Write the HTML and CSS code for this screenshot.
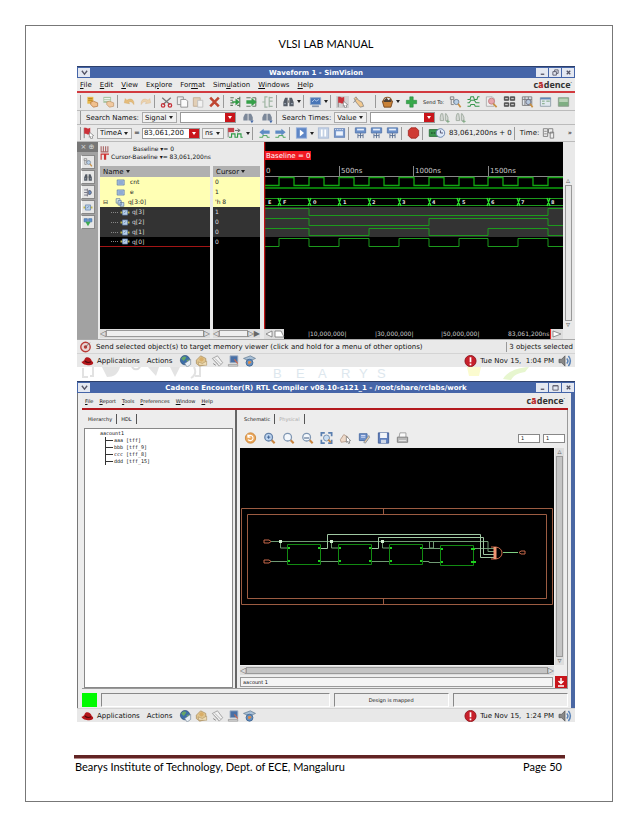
FILE: index.html
```html
<!DOCTYPE html>
<html lang="en">
<head>
    <meta charset="UTF-8">
    <meta name="viewport" content="width=device-width, initial-scale=1.0">
    <title>VLSI LAB MANUAL</title>
    <link rel="stylesheet" href="styles.css">
</head>
<body>

<!-- shared icons -->
<svg class="sprite" aria-hidden="true">
    <symbol id="i-note" viewBox="0 0 14 14"><path d="M1 1h7v8H1z" fill="#e8b84a"/><path d="M2 3h5M2 5h5" stroke="#b07c1e"/><path d="M5 7l3-1 5 2v4l-5 1-3-3z" fill="#f0c08e" stroke="#b0713c" stroke-width=".8"/></symbol>
    <symbol id="i-note2" viewBox="0 0 14 14"><path d="M1 1h9v7H1z" fill="#a9c5a4"/><path d="M2 3h7M2 5h7" stroke="#fff"/><path d="M5 7l3-1 5 2v4l-5 1-3-3z" fill="#f0c9a0" stroke="#c09468" stroke-width=".8"/></symbol>
    <symbol id="i-undo" viewBox="0 0 14 14"><path d="M1 8l1-5 2 2c4-3 9-1 8 5-1-3-4-4-6-3l1 2z" fill="#e5bd7c" stroke="#cfa35c" stroke-width=".5"/></symbol>
    <symbol id="i-redo" viewBox="0 0 14 14"><path d="M13 8l-1-5-2 2c-4-3-9-1-8 5 1-3 4-4 6-3L7 9z" fill="#ecd3ae" stroke="#d8b98d" stroke-width=".5"/></symbol>
    <symbol id="i-cut" viewBox="0 0 14 14"><path d="M2 2l9 8M12 2L3 10" stroke="#777" stroke-width="1.5"/><circle cx="3" cy="11" r="2" fill="none" stroke="#c8323a" stroke-width="1.5"/><circle cx="11" cy="11" r="2" fill="none" stroke="#c8323a" stroke-width="1.5"/></symbol>
    <symbol id="i-copy" viewBox="0 0 14 14"><path d="M1 1h7v9H1z" fill="#eee" stroke="#888"/><path d="M5 4h6l2 2v7H5z" fill="#fafafa" stroke="#888"/></symbol>
    <symbol id="i-paste" viewBox="0 0 14 14"><path d="M1 2h8v10H1z" fill="#e2cfb6" stroke="#c0ab90"/><path d="M6 5h6v8H6z" fill="#f2f2f2" stroke="#bbb"/></symbol>
    <symbol id="i-del" viewBox="0 0 14 14"><path d="M2 2l10 10M12 2L2 12" stroke="#bf4632" stroke-width="3"/></symbol>
    <symbol id="i-expand" viewBox="0 0 14 14"><path d="M1 2h4M1 5h3M1 8h4M1 11h3M12 1v12M9 3h3M9 11h3" stroke="#5e755e" stroke-width="1.3"/><path d="M3 6h4V3l5 4-5 4V8H3z" fill="#2f9b43"/></symbol>
    <symbol id="i-collapse" viewBox="0 0 14 14"><path d="M1 2h5M1 12h5M12 2v10M8 2h4M8 12h4" stroke="#667a66" stroke-width="1.3"/><path d="M1 5h6V2l6 5-6 5V9H1z" fill="#35a048"/></symbol>
    <symbol id="i-tree" viewBox="0 0 14 14"><path d="M7 1H4v12h3M4 7H1M9 1v12M9 2h4M9 6h4M9 12h4" fill="none" stroke="#9fb5a3" stroke-width="1.4"/></symbol>
    <symbol id="i-binoc" viewBox="0 0 14 14"><path d="M3 2h3v10H1V7zM11 2H8v10h5V7z" fill="#555c66"/><path d="M6 5h2v3H6z" fill="#888"/><path d="M2 9h2M10 9h2" stroke="#b7c4d5"/></symbol>
    <symbol id="i-find" viewBox="0 0 14 14"><path d="M3 2h3v8H1V6zM10 2H7v8h5V6z" fill="#7c8899"/><path d="M9 10h4l-2 3z" fill="#4469a8"/></symbol>
    <symbol id="i-findoff" viewBox="0 0 14 14"><path d="M3 2h2l1 8H2V6zM9 2H8v8h3V6z" fill="#d5d8d5" stroke="#9da99d"/><path d="M9 11h4M11 9v4" stroke="#7aa67e"/></symbol>
    <symbol id="i-screen" viewBox="0 0 14 14"><path d="M1 2h12v8H1z" fill="#4876b8" stroke="#8ea6c8"/><path d="M3 12h8" stroke="#8895aa" stroke-width="2"/><path d="M3 7l3-3 2 2 3-2" stroke="#bed2f0" fill="none"/></symbol>
    <symbol id="i-flag" viewBox="0 0 14 14"><path d="M2 1v12" stroke="#777"/><path d="M2 1c3-1 4 2 7 0v7c-3 2-4-1-7 0z" fill="#cc3038"/><path d="M8 6l5 4-2 1 1 2-2 1-1-3-1 1z" fill="#fff" stroke="#666" stroke-width=".7"/></symbol>
    <symbol id="i-hand" viewBox="0 0 14 14"><path d="M2 3l2-2 3 4 4 2 2 5-4 1-5-6z" fill="#f2c98f" stroke="#777" stroke-width=".8"/><path d="M1 8l4-5" stroke="#888"/></symbol>
    <symbol id="i-basket" viewBox="0 0 14 14"><path d="M2 6c1-6 9-6 10 0" fill="none" stroke="#8b5a2b" stroke-width="1.3"/><path d="M1 6h12l-2 7H3z" fill="#c98238" stroke="#70431c"/><path d="M3 5l3-3 2 3 3-2v4H3z" fill="#4b4036"/></symbol>
    <symbol id="i-plus" viewBox="0 0 14 14"><path d="M5 1h4v4h4v4H9v4H5V9H1V5h4z" fill="#37aa4b" stroke="#238036" stroke-width=".6"/></symbol>
    <symbol id="i-treemag" viewBox="0 0 14 14"><path d="M1 1h4v3H1zM5 5h4v3H5zM2 4v6h3" fill="none" stroke="#777"/><circle cx="8" cy="7" r="3" fill="#b8cfe6" stroke="#6c7f93"/><path d="M10 9l3 4" stroke="#c99043" stroke-width="2"/></symbol>
    <symbol id="i-waves" viewBox="0 0 14 14"><path d="M0 4h3l1-3h3l1 3h3l1-3h2M0 8h2l2-3h4l2 3h4M0 12h3l1-2h4l1 2h5" fill="none" stroke="#37964d" stroke-width="1.2"/></symbol>
    <symbol id="i-docmag" viewBox="0 0 14 14"><path d="M1 1h7l2 2v9H1z" fill="#eee" stroke="#aaa"/><circle cx="7" cy="6" r="3.5" fill="#e7a6ac" stroke="#c07a80"/><path d="M9 9l4 4" stroke="#c99043" stroke-width="2"/></symbol>
    <symbol id="i-blocks" viewBox="0 0 14 14"><path d="M1 1h5v4H1zM8 1h5v4H8zM1 8h5v4H1zM8 8h5v4H8z" fill="#666" stroke="#444"/><path d="M2 3h3M9 3h3M2 10h3M9 10h3" stroke="#ddd"/></symbol>
    <symbol id="i-gridmag" viewBox="0 0 14 14"><path d="M1 1h11v10H1zM4 1v10M8 1v10M1 4h11" fill="#dfe5ec" stroke="#777"/><circle cx="8" cy="7" r="3" fill="#b6c8dd" stroke="#667"/><path d="M10 9l3 4" stroke="#c99043" stroke-width="2"/></symbol>
    <symbol id="i-panel" viewBox="0 0 14 14"><path d="M1 2h12v10H1z" fill="#dfe8ee" stroke="#8b9aa6"/><path d="M1 3h12" stroke="#5f87b8" stroke-width="2"/><path d="M3 6h3M3 9h3M8 6h4" stroke="#6b9a6c"/></symbol>
    <symbol id="i-green" viewBox="0 0 14 14"><path d="M1 2h12v10H1z" fill="#7fae83" stroke="#8b9a8c"/><path d="M2 3h10v4H2z" fill="#b8d2b7"/></symbol>
    <symbol id="i-gate" viewBox="0 0 14 14"><path d="M1 3h5M1 7h5M1 11h5M6 1v12" stroke="#667" stroke-width="1.3"/><path d="M8 4h2c3 0 3 6 0 6H8z" fill="#6f94c8" stroke="#445"/></symbol>
    <symbol id="i-groups" viewBox="0 0 14 14"><path d="M1 1h5v5H1zM8 1h5v5H8z" fill="#5f92cf" stroke="#3f6aa0"/><path d="M3 6l4 7 4-7z" fill="#3faa52"/></symbol>
    <symbol id="i-jump" viewBox="0 0 20 14"><path d="M2 1v11" stroke="#777"/><path d="M2 1h7v5H2z" fill="#c3414a"/><path d="M3 12h3V8h4v4h3V8h4v4h2" fill="none" stroke="#2e9a45" stroke-width="1.3"/><path d="M10 4h5M13 2l3 2-3 2" stroke="#555" fill="none"/></symbol>
    <symbol id="i-left" viewBox="0 0 14 14"><path d="M1 6l5-4v2h7v4H6v2z" fill="#5e8bc4"/><path d="M1 12h4v-2h5v2h3" fill="none" stroke="#3c9d4c"/></symbol>
    <symbol id="i-right" viewBox="0 0 14 14"><path d="M13 6L8 2v2H1v4h7v2z" fill="#5e8bc4"/><path d="M1 12h4v-2h5v2h3" fill="none" stroke="#3c9d4c"/></symbol>
    <symbol id="i-play" viewBox="0 0 14 14"><rect x="1" y="1" width="12" height="12" fill="#5e86c6" stroke="#93aedb"/><path d="M5 3l5 4-5 4z" fill="#fff"/></symbol>
    <symbol id="i-pause" viewBox="0 0 14 14"><rect x="1" y="1" width="12" height="12" fill="#c4d2e6" stroke="#a9bad4"/><path d="M5 3v8M9 3v8" stroke="#fff" stroke-width="2"/></symbol>
    <symbol id="i-film" viewBox="0 0 14 14"><rect x="1" y="2" width="12" height="10" fill="#7899cd" stroke="#6683b4"/><path d="M3 5h8v5H3z" fill="#edf3fc"/><path d="M2 3h10" stroke="#fff" stroke-dasharray="1 1"/></symbol>
    <symbol id="i-step" viewBox="0 0 14 14"><path d="M1 1h12v6H1z" fill="#6c91ca" stroke="#5576ab"/><path d="M3 3h8" stroke="#e7effb" stroke-width="2"/><path d="M7 7v6M4 10h6M4 8v5M10 8v5" stroke="#536a90"/></symbol>
    <symbol id="i-stop" viewBox="0 0 14 14"><path d="M4 1h6l3 3v6l-3 3H4l-3-3V4z" fill="#cf3b34" stroke="#a32823"/></symbol>
    <symbol id="i-time" viewBox="0 0 20 14"><path d="M1 3h12v8H1z" fill="#3c9650" stroke="#2b6f3a"/><path d="M3 7h8" stroke="#255c32" stroke-width="2" stroke-dasharray="2 1"/><circle cx="14" cy="7" r="5" fill="#dfe9f7" stroke="#5f7ba8"/><path d="M14 4v3h3" stroke="#446" fill="none"/></symbol>
    <symbol id="i-pages" viewBox="0 0 14 14"><path d="M1 2h5v9H1zM7 2h5v5H7zM9 6h4v7H9z" fill="#eee" stroke="#777"/><path d="M2 5h3M2 8h3" stroke="#777"/></symbol>
    <symbol id="i-chip" viewBox="0 0 14 14"><path d="M0 7h14" stroke="#c2b84b" stroke-width="3"/><path d="M3 3h8v8H3z" fill="#b8cfe8" stroke="#5978a5"/><path d="M5 8l4-3" stroke="#5978a5"/></symbol>
    <symbol id="i-sig" viewBox="0 0 14 14"><path d="M1 3h11v8H1z" fill="#a9c3e6" stroke="#56749f"/><path d="M3 6h7M3 8h7" stroke="#6788b8"/></symbol>
    <symbol id="i-bus" viewBox="0 0 14 14"><path d="M1 1h6v7H1z" fill="#dcebdc" stroke="#577494"/><path d="M4 4h5v7H4zM7 7h6v6H7z" fill="#bcd2ec" stroke="#577494"/></symbol>
    <symbol id="i-hat" viewBox="0 0 14 14"><path d="M0 8c2-1 3-1 4-4 2-3 7-1 8 3 3 2 2 5-3 5-4 0-8-1-9-4z" fill="#b3171b"/><path d="M4 7c2 2 5 2 7 1" stroke="#50090b" fill="none" stroke-width="1.3"/></symbol>
    <symbol id="i-globe" viewBox="0 0 14 14"><circle cx="6.500" cy="6" r="5.500" fill="#3d6ea8" stroke="#24466f" stroke-width=".7"/><path d="M2 4c2-3 5-3 6-1L5 7zM8 6l3-1-1 4z" fill="#67a765"/><path d="M6 10l7-5v6l-4 3z" fill="#e6edf4" stroke="#687b8c" stroke-width=".7"/></symbol>
    <symbol id="i-mail" viewBox="0 0 14 14"><path d="M1 6l5-5 6 3v7l-7 2-4-3z" fill="#e0c58e" stroke="#a58958" stroke-width=".8"/><circle cx="7" cy="5" r="2.500" fill="#d9ae68"/><path d="M3 8l5 2 5-3v5H4z" fill="#efddb6" stroke="#a58958" stroke-width=".6"/></symbol>
    <symbol id="i-doc" viewBox="0 0 14 14"><path d="M1 4l6-3 6 8-4 4z" fill="#f1f1f1" stroke="#888" stroke-width=".8"/><path d="M4 4l7 7M3 6l5 5" stroke="#aaa"/><path d="M2 10l3 2" stroke="#777"/></symbol>
    <symbol id="i-pc" viewBox="0 0 14 14"><path d="M3 1h9v8H3z" fill="#4970a6" stroke="#9aabc0"/><path d="M1 11h11v2H1z" fill="#d8d8d8" stroke="#888" stroke-width=".7"/><path d="M8 5l4 5" stroke="#c66b54" stroke-width="1.5"/></symbol>
    <symbol id="i-cap" viewBox="0 0 14 14"><path d="M0 4l8-3 6 3-7 3z" fill="#a8bfd6" stroke="#61798f" stroke-width=".8"/><circle cx="7" cy="9" r="4" fill="#6390c2" stroke="#3f6591"/><path d="M5 8c2-2 5-1 4 1l-3 2z" fill="#e38d48"/></symbol>
    <symbol id="i-alert" viewBox="0 0 14 14"><circle cx="7" cy="7" r="6.500" fill="#c8202b" stroke="#8b1119"/><path d="M7 2.500v6M7 10v2" stroke="#fff" stroke-width="2"/></symbol>
    <symbol id="i-sound" viewBox="0 0 16 14"><path d="M1 5h3l4-4v12L4 9H1z" fill="#888" stroke="#555" stroke-width=".8"/><path d="M10 4c2 2 2 4 0 6M12 1c3 4 3 8 0 12" stroke="#5b84b8" stroke-width="1.8" fill="none"/></symbol>
    <symbol id="i-reload" viewBox="0 0 14 14"><circle cx="7" cy="7" r="6" fill="#eba75b" stroke="#c98438"/><path d="M4 5c2-2 6-1 6 2 0 3-4 4-6 2M4 3v3h3" stroke="#fff" stroke-width="1.3" fill="none"/></symbol>
    <symbol id="i-mag" viewBox="0 0 14 14"><path d="M8 8l5 5" stroke="#c98540" stroke-width="2.500"/><circle cx="6" cy="6" r="4.500" fill="#f4f8fc" stroke="#7f96b2" stroke-width="1.500"/></symbol>
    <symbol id="i-magin" viewBox="0 0 14 14"><path d="M8 8l5 5" stroke="#c98540" stroke-width="2.500"/><circle cx="6" cy="6" r="4.500" fill="#bfd6f0" stroke="#6481a8" stroke-width="1.500"/><path d="M4 6h4M6 4v4" stroke="#34598f"/></symbol>
    <symbol id="i-magout" viewBox="0 0 14 14"><path d="M8 8l5 5" stroke="#c98540" stroke-width="2.500"/><circle cx="6" cy="6" r="4.500" fill="#f4f8fc" stroke="#7f96b2" stroke-width="1.500"/><path d="M3 7h6" stroke="#8a9db5" stroke-width="2"/></symbol>
    <symbol id="i-fit" viewBox="0 0 14 14"><path d="M1 5V1h4M9 1h4v4M13 9v4H9M5 13H1V9" fill="none" stroke="#5a7fb0" stroke-width="2"/><circle cx="7" cy="7" r="3.500" fill="#cadef2" stroke="#6b86a8"/><path d="M9 9l3 3" stroke="#c98540" stroke-width="2"/></symbol>
    <symbol id="i-pick" viewBox="0 0 14 14"><path d="M1 9l4-6 5 3-2 5-6 1z" fill="#eed9c8" stroke="#b39a8a"/><path d="M8 5l5 5-2 .5 1 2.500-1.500.5-1-2.500L8 12z" fill="#fff" stroke="#666" stroke-width=".8"/></symbol>
    <symbol id="i-edit" viewBox="0 0 14 14"><path d="M1 2h9v8H1z" fill="#6d90c9" stroke="#4568a2"/><path d="M3 4h5M3 6h5" stroke="#eef" /><path d="M6 12l6-8 1 2-5 7z" fill="#e5c9a0" stroke="#6d7f9c" stroke-width=".8"/></symbol>
    <symbol id="i-save" viewBox="0 0 14 14"><path d="M1 1h12v12H1z" fill="#5f7fbd" stroke="#3f5c93"/><path d="M3 1h8v6H3z" fill="#f2f5fa"/><path d="M4 9h6v4H4z" fill="#cdd6e6"/></symbol>
    <symbol id="i-print" viewBox="0 0 14 14"><path d="M3 6l1-5h7v5" fill="#fafafa" stroke="#999"/><path d="M1 6h12v6H1z" fill="#b9b9b9" stroke="#777"/><path d="M3 10h8" stroke="#eee"/></symbol>
    <symbol id="i-target" viewBox="0 0 14 14"><circle cx="7" cy="7" r="5.500" fill="#e9d5d3" stroke="#b93b36" stroke-width="1.600"/><circle cx="7" cy="7" r="2" fill="#b93b36"/><path d="M7 7l5-5" stroke="#555"/></symbol>
</svg>

<main class="sheet">
    <header class="sheet-header">VLSI LAB MANUAL</header>

    <!-- SimVision waveform window -->
    <section class="window sim">
        <div class="titlebar">
            <button class="win-btn" aria-label="Menu"><svg viewBox="0 0 8 8"><path d="M1 2l3 4 3-4" fill="none" stroke="#556" stroke-width="1.500"/></svg></button>
            <h2 class="win-title">Waveform 1 - SimVision</h2>
            <button class="win-btn" aria-label="Minimize"><svg viewBox="0 0 8 8"><path d="M2 6h4" stroke="#556" stroke-width="1.500"/></svg></button>
            <button class="win-btn" aria-label="Restore"><svg viewBox="0 0 8 8"><path d="M1 3h4v4H1zM3 3V1h4v4H5" fill="none" stroke="#556"/></svg></button>
            <button class="win-btn" aria-label="Close"><svg viewBox="0 0 8 8"><path d="M2 2l4 4M6 2L2 6" stroke="#556" stroke-width="1.500"/></svg></button>
        </div>
        <nav class="menubar">
            <button><u>F</u>ile</button>
            <button><u>E</u>dit</button>
            <button><u>V</u>iew</button>
            <button>Ex<u>p</u>lore</button>
            <button>For<u>m</u>at</button>
            <button>Sim<u>u</u>lation</button>
            <button><u>W</u>indows</button>
            <button><u>H</u>elp</button>
            <span class="brand">c<b>ā</b>dence<sup>·</sup></span>
        </nav>

        <div class="toolbar toolbar-main">
            <div class="group">
                <svg class="icon"><use href="#i-note"/></svg>
                <svg class="icon"><use href="#i-note2"/></svg>
            </div>
            <div class="group">
                <svg class="icon"><use href="#i-undo"/></svg>
                <svg class="icon"><use href="#i-redo"/></svg>
            </div>
            <div class="group">
                <svg class="icon"><use href="#i-cut"/></svg>
                <svg class="icon"><use href="#i-copy"/></svg>
                <svg class="icon"><use href="#i-paste"/></svg>
                <svg class="icon"><use href="#i-del"/></svg>
            </div>
            <div class="group">
                <svg class="icon"><use href="#i-expand"/></svg>
                <svg class="icon"><use href="#i-collapse"/></svg>
                <svg class="icon"><use href="#i-tree"/></svg>
            </div>
            <div class="group">
                <button class="tool-btn drop" aria-label="Find"><svg class="icon"><use href="#i-binoc"/></svg></button>
            </div>
            <div class="group">
                <button class="tool-btn drop" aria-label="Screen"><svg class="icon"><use href="#i-screen"/></svg></button>
            </div>
            <div class="group">
                <button class="tool-btn pressed" aria-label="Marker"><svg class="icon"><use href="#i-flag"/></svg></button>
                <svg class="icon"><use href="#i-hand"/></svg>
            </div>
            <div class="group send">
                <button class="tool-btn drop" aria-label="Basket"><svg class="icon"><use href="#i-basket"/></svg></button>
                <svg class="icon"><use href="#i-plus"/></svg>
                <span class="send-label">Send To:</span>
                <svg class="icon"><use href="#i-treemag"/></svg>
                <svg class="icon"><use href="#i-waves"/></svg>
                <svg class="icon"><use href="#i-docmag"/></svg>
                <svg class="icon"><use href="#i-blocks"/></svg>
                <svg class="icon"><use href="#i-gridmag"/></svg>
                <svg class="icon"><use href="#i-panel"/></svg>
                <svg class="icon"><use href="#i-green"/></svg>
            </div>
        </div>

        <div class="toolbar toolbar-search">
            <div class="group">
                <label for="names">Search Names:</label>
                <span class="pick"><select id="names"><option>Signal</option></select></span>
                <span class="combo"><input type="text" class="w-names" aria-label="Name"><button class="red-btn" aria-label="Open"></button></span>
                <svg class="icon spaced"><use href="#i-find"/></svg>
                <svg class="icon spaced"><use href="#i-find"/></svg>
            </div>
            <div class="group">
                <label for="times">Search Times:</label>
                <span class="pick"><select id="times"><option>Value</option></select></span>
                <span class="combo"><input type="text" class="w-times" aria-label="Time value"><button class="red-btn" aria-label="Open"></button></span>
                <svg class="icon"><use href="#i-findoff"/></svg>
                <svg class="icon"><use href="#i-findoff"/></svg>
            </div>
        </div>

        <div class="toolbar toolbar-time">
            <div class="group tight">
                <svg class="icon"><use href="#i-flag"/></svg>
                <span class="pick"><select aria-label="Cursor"><option>TimeA</option></select></span>
                <span>=</span>
                <span class="combo"><input type="text" class="w-cursor" value="83,061,200" aria-label="Cursor time"><button class="red-btn" aria-label="Open"></button></span>
                <span class="pick"><select aria-label="Unit"><option>ns</option></select></span>
                <button class="tool-btn drop" aria-label="Jump"><svg class="icon wide"><use href="#i-jump"/></svg></button>
            </div>
            <div class="group">
                <svg class="icon"><use href="#i-left"/></svg>
                <svg class="icon"><use href="#i-right"/></svg>
            </div>
            <div class="group">
                <button class="tool-btn drop" aria-label="Run"><svg class="icon"><use href="#i-play"/></svg></button>
                <svg class="icon"><use href="#i-pause"/></svg>
                <svg class="icon"><use href="#i-film"/></svg>
            </div>
            <div class="group">
                <svg class="icon"><use href="#i-step"/></svg>
                <svg class="icon"><use href="#i-step"/></svg>
                <svg class="icon"><use href="#i-step"/></svg>
            </div>
            <div class="group">
                <svg class="icon"><use href="#i-stop"/></svg>
            </div>
            <div class="group">
                <svg class="icon wide"><use href="#i-time"/></svg>
                <span>83,061,200ns + 0</span>
            </div>
            <div class="group">
                <span>Time:</span>
                <svg class="icon"><use href="#i-pages"/></svg>
            </div>
            <span class="more">»</span>
        </div>

        <div class="sim-body">
            <aside class="side">
                <div class="side-head">× ⊕</div>
                <button class="side-tab" aria-label="Browse"><svg class="icon"><use href="#i-treemag"/></svg></button>
                <button class="side-tab" aria-label="Find"><svg class="icon"><use href="#i-binoc"/></svg></button>
                <button class="side-tab" aria-label="Trace"><svg class="icon"><use href="#i-gate"/></svg></button>
                <button class="side-tab" aria-label="Module"><svg class="icon"><use href="#i-chip"/></svg></button>
                <button class="side-tab" aria-label="Groups"><svg class="icon"><use href="#i-groups"/></svg></button>
            </aside>

            <div class="signals">
                <div class="cursor-info">
                    <svg class="cursor-icon" viewBox="0 0 8 14"><path d="M1 1v5h6V1M3 1v5M5 1v5" fill="none" stroke="#a66"/><path d="M1 13V8h3v5M5 13V8h3" fill="none" stroke="#c33"/></svg>
                    <div>
                        <p class="base">Baseline ▾= 0</p>
                        <p>Cursor-Baseline ▾= 83,061,200ns</p>
                    </div>
                </div>
                <div class="lists">
                    <div class="list names">
                        <div class="list-head">Name <i class="caret"></i></div>
                        <div class="row yellow"><svg class="icon"><use href="#i-sig"/></svg>cnt</div>
                        <div class="row yellow"><svg class="icon"><use href="#i-sig"/></svg>e</div>
                        <div class="row yellow parent"><span class="minus">⊟</span><svg class="icon"><use href="#i-bus"/></svg>q[3:0]</div>
                        <div class="row dark child"><svg class="icon"><use href="#i-chip"/></svg>q[3]</div>
                        <div class="row dark child"><svg class="icon"><use href="#i-chip"/></svg>q[2]</div>
                        <div class="row dark child"><svg class="icon"><use href="#i-chip"/></svg>q[1]</div>
                        <div class="row child last"><svg class="icon"><use href="#i-chip"/></svg>q[0]</div>
                        <div class="void"></div>
                        <div class="hscroll"><span>◁</span><i></i><span>▷</span></div>
                    </div>
                    <div class="list values">
                        <div class="list-head">Cursor <i class="caret"></i></div>
                        <div class="row yellow">0</div>
                        <div class="row yellow">1</div>
                        <div class="row yellow">'h 8</div>
                        <div class="row dark">1</div>
                        <div class="row dark">0</div>
                        <div class="row dark">0</div>
                        <div class="row">0</div>
                        <div class="void"></div>
                        <div class="hscroll"><span>◁</span><i></i><span>▷</span><span>▶</span></div>
                    </div>
                </div>
            </div>

            <!-- waves: one clock period is 30 units, 500ns is 74.6 -->
            <svg class="waves" viewBox="264 142 299 197" role="img" aria-label="Waveforms">
                <rect x="264" y="142" width="299" height="197" fill="#000"/>
                <rect x="264" y="207" width="299" height="30" fill="#333"/>
                <path d="M265 176.500h298M339.500 166v11M413.500 166v11M488.500 166v11" stroke="#888" fill="none"/>
                <g fill="#ccc" font-size="7">
                    <text x="266" y="173">0</text><text x="341" y="173">500ns</text><text x="415" y="173">1000ns</text><text x="490" y="173">1500ns</text>
                </g>
                <g fill="none" stroke="#12a812" stroke-width="1.300">
                    <path d="M265 185.500h14v-8h15v8h15v-8h15v8h15v-8h15v8h15v-8h15v8h15v-8h15v8h15v-8h15v8h15v-8h15v8h14v-8h15v8h15v-8h15v8h15v-8h15"/>
                    <path d="M265 188h298" stroke="#0a7a0a" stroke-width="2"/>
                </g>
                <g fill="none" stroke="#1c9a1c">
                    <path d="M265 198.500h298M265 205.500h298"/>
                    <path d="M265 208.500h44v7h239v-7h15"/>
                    <path d="M265 218.500h44v7h120v-7h119v7h15"/>
                    <path d="M265 228.500h44v7h60v-7h60v7h59v-7h60v7h15"/>
                    <path d="M265 246.500h14v-8h30v8h30v-8h30v8h30v-8h30v8h30v-8h29v8h30v-8h30v8h15"/>
                </g>
                <path d="M278 198l3 8m0-8l-3 8M308 198l3 8m0-8l-3 8M338 198l3 8m0-8l-3 8M368 198l3 8m0-8l-3 8M398 198l3 8m0-8l-3 8M428 198l3 8m0-8l-3 8M457 198l3 8m0-8l-3 8M487 198l3 8m0-8l-3 8M517 198l3 8m0-8l-3 8M547 198l3 8m0-8l-3 8" stroke="#2fe02f" stroke-width="1.300"/>
                <g class="bus-values" fill="#ddd" font-size="5" font-weight="bold">
                    <text x="268" y="204">E</text><text x="283" y="204">F</text><text x="313" y="204">0</text><text x="343" y="204">1</text><text x="372" y="204">2</text><text x="402" y="204">3</text><text x="432" y="204">4</text><text x="462" y="204">5</text><text x="491" y="204">6</text><text x="521" y="204">7</text><text x="551" y="204">8</text>
                </g>
                <path d="M264.500 142v188" stroke="#c01414" stroke-width="1.500"/>
                <rect x="265" y="151" width="46" height="9" fill="#f01820"/>
                <text x="266" y="158" fill="#fff" font-size="7">Baseline = 0</text>
                <rect x="264" y="329" width="20" height="10" fill="#ddd"/>
                <path d="M272 331l-6 3 6 3zM275 331h6l3 6h-9z" fill="#fff" stroke="#777" stroke-width=".8"/>
                <g fill="#ccc" font-size="6">
                    <text x="308" y="336">|10,000,000|</text><text x="375" y="336">|30,000,000|</text><text x="441" y="336">|50,000,000|</text><text x="508" y="336">83,061,200ns</text>
                </g>
                <path d="M551 329h12v10h-12z" fill="#ddd"/>
                <path d="M550.500 329v10" stroke="#d22"/>
                <path d="M553 331l8 3-8 3z" fill="#fff" stroke="#777" stroke-width=".8"/>
            </svg>
            <div class="vscroll"><span>▵</span><i></i><span>▿</span></div>
        </div>

        <div class="statusbar">
            <svg class="icon"><use href="#i-target"/></svg>
            <p class="hint">Send selected object(s) to target memory viewer (click and hold for a menu of other options)</p>
            <p class="count">3 objects selected</p>
        </div>
    </section>

    <div class="taskbar">
        <svg class="icon"><use href="#i-hat"/></svg>
        <button>Applications</button>
        <button>Actions</button>
        <svg class="icon"><use href="#i-globe"/></svg>
        <svg class="icon"><use href="#i-mail"/></svg>
        <svg class="icon"><use href="#i-doc"/></svg>
        <svg class="icon"><use href="#i-pc"/></svg>
        <svg class="icon"><use href="#i-cap"/></svg>
        <span class="tray"><svg class="icon"><use href="#i-alert"/></svg><time>Tue Nov 15,&nbsp; 1:04 PM</time><svg class="icon wide"><use href="#i-sound"/></svg></span>
    </div>

    <!-- faint college crest between the two windows -->
    <svg class="watermark" viewBox="77 367 498 14" aria-hidden="true">
        <path d="M83 368v9h5M93 367v9h-3M194 367c2 4 2 8-3 11M200 367v9h-5" fill="none" stroke="#e2e2e2" stroke-width="2"/>
        <path d="M102 367h18c-2 7-6 10-13 10zM148 367l8 9 3-9zM170 367l5 10 5-10z" fill="#e3e3e3"/>
        <path d="M132 367c2 3 6 3 8 0" fill="none" stroke="#ddd" stroke-width="2"/>
        <text x="273 296 318 341 359 377" y="378" font-size="13" fill="#dde7ee">BEARYS</text>
        <path d="M467 367h14l-2 9h-10z" fill="#fbfbcf"/>
        <path d="M503 379c5-8 14-11 26-12l-4 5c-7 1-11 3-14 8z" fill="#e7f6cf"/>
    </svg>

    <!-- RTL Compiler window -->
    <section class="window rtl">
        <div class="titlebar">
            <button class="win-btn" aria-label="Menu"><svg viewBox="0 0 8 8"><path d="M1 2l3 4 3-4" fill="none" stroke="#556" stroke-width="1.500"/></svg></button>
            <h2 class="win-title">Cadence Encounter(R) RTL Compiler v08.10-s121_1 - /root/share/rclabs/work</h2>
            <button class="win-btn" aria-label="Minimize"><svg viewBox="0 0 8 8"><path d="M2 6h4" stroke="#556" stroke-width="1.500"/></svg></button>
            <button class="win-btn" aria-label="Maximize"><svg viewBox="0 0 8 8"><path d="M1 2h6v5H1zM1 2h6" fill="none" stroke="#556"/></svg></button>
            <button class="win-btn" aria-label="Close"><svg viewBox="0 0 8 8"><path d="M2 2l4 4M6 2L2 6" stroke="#556" stroke-width="1.500"/></svg></button>
        </div>
        <div class="rtl-frame">
            <nav class="menubar small">
                <button><u>F</u>ile</button>
                <button><u>R</u>eport</button>
                <button><u>T</u>ools</button>
                <button><u>P</u>references</button>
                <button><u>W</u>indow</button>
                <button><u>H</u>elp</button>
                <span class="brand">c<b>ā</b>dence<sup>·</sup></span>
            </nav>
            <div class="panes">
                <div class="pane tree-pane">
                    <div class="tabs"><button>Hierarchy</button><button>HDL</button></div>
                    <div class="tree">
                        <p>aacount1</p>
                        <ul>
                            <li>aaa [tff]</li>
                            <li>bbb [tff_9]</li>
                            <li>ccc [tff_8]</li>
                            <li>ddd [tff_15]</li>
                        </ul>
                    </div>
                </div>
                <div class="pane schem-pane">
                    <div class="tabs"><button>Schematic</button><button class="off">Physical</button></div>
                    <div class="schem-tools">
                        <svg class="icon"><use href="#i-reload"/></svg>
                        <svg class="icon"><use href="#i-magin"/></svg>
                        <svg class="icon"><use href="#i-mag"/></svg>
                        <svg class="icon"><use href="#i-magout"/></svg>
                        <svg class="icon"><use href="#i-fit"/></svg>
                        <svg class="icon"><use href="#i-pick"/></svg>
                        <svg class="icon"><use href="#i-edit"/></svg>
                        <svg class="icon"><use href="#i-save"/></svg>
                        <svg class="icon"><use href="#i-print"/></svg>
                        <span class="pages"><input type="text" value="1" aria-label="Page"><input type="text" value="1" aria-label="Pages"></span>
                    </div>
                    <div class="schem-view">
                        <svg class="schematic" viewBox="240 448 314 217" role="img" aria-label="Schematic">
                            <rect x="240" y="448" width="314" height="217" fill="#000"/>
                            <g fill="none" stroke="#9c5c42">
                                <path d="M241.500 508.500h311v96h-311zM247.500 514.500h299v84h-299zM383.500 508v6M383.500 599v5"/>
                            </g>
                            <g fill="none" stroke="#6f9a73">
                                <path d="M271 541.500h217v10h7M280.500 541v7h7M331.500 541v7h7M382.500 541v7h7"/>
                                <path d="M429.500 541v7h4v-7M422 548.500h18M474 548.500h21"/>
                                <path d="M270 561.500h17M321 561.500h17M372 561.500h17M423 561.500h6v1h11"/>
                            </g>
                            <g fill="none" stroke="#9fc7a2">
                                <path d="M321 548.500h6.500v-14h153v23H495"/>
                                <path d="M372 548.500h6.500v-11h105v17H495"/>
                            </g>
                            <g fill="none" stroke="#128a12">
                                <path d="M287.500 544.500h33v20h-33zM338.500 544.500h33v20h-33zM389.500 544.500h33v20h-33zM440.500 545.500h33v20h-33z"/>
                            </g>
                            <path d="M288 548h2m28 0h2M288 561h2m28 0h2M339 548h2m28 0h2M339 561h2m28 0h2M390 548h2m28 0h2M390 561h2m28 0h2M441 549h2m28 0h4M441 562h2m28 0h5" stroke="#1fd01f" stroke-width="2"/>
                            <path d="M279 540h3v3h-3zM330 540h3v3h-3zM381 540h3v3h-3z" fill="#cfeccf"/>
                            <g fill="none" stroke="#c8694a">
                                <path d="M264 540h5l2 1.500-2 1.500h-5zM264 560h5l2 1.500-2 1.500h-5z"/>
                                <path d="M491 547h5c8 1 8 11 0 12h-5M519 552.500l2-1.500h4v3h-4z"/>
                                <path d="M495 547v12" stroke="#f09470" stroke-width="3"/>
                            </g>
                            <path d="M503 552.500h15" stroke="#7fcf83"/>
                        </svg>
                        <div class="vscroll"><span>▵</span><i></i><span>▿</span></div>
                    </div>
                    <div class="hscroll"><span>◁</span><i></i><span>▷</span></div>
                    <div class="command">
                        <input type="text" value="aacount 1" aria-label="Design">
                        <button aria-label="Load"><svg viewBox="0 0 12 12"><path d="M6 2v5M3.500 5L6 7.500 8.500 5M3 10h6" fill="none" stroke="#fff" stroke-width="1.500"/></svg></button>
                    </div>
                </div>
            </div>
            <div class="rtl-status">
                <span class="led"></span>
                <p class="cell wide-cell"></p>
                <p class="cell">Design is mapped</p>
                <p class="cell"></p>
            </div>
        </div>
    </section>

    <div class="taskbar">
        <svg class="icon"><use href="#i-hat"/></svg>
        <button>Applications</button>
        <button>Actions</button>
        <svg class="icon"><use href="#i-globe"/></svg>
        <svg class="icon"><use href="#i-mail"/></svg>
        <svg class="icon"><use href="#i-doc"/></svg>
        <svg class="icon"><use href="#i-pc"/></svg>
        <svg class="icon"><use href="#i-cap"/></svg>
        <span class="tray"><svg class="icon"><use href="#i-alert"/></svg><time>Tue Nov 15,&nbsp; 1:24 PM</time><svg class="icon wide"><use href="#i-sound"/></svg></span>
    </div>

    <footer class="sheet-footer">
        <span>Bearys Institute of Technology, Dept. of ECE, Mangaluru</span>
        <span>Page 50</span>
    </footer>
</main>

</body>
</html>
```
FILE: styles.css
```css
* {
    box-sizing: border-box;
}
body {
    margin: 25px;
    background: #fff;
    color: #111;
    font-family: "DejaVu Sans", Verdana, sans-serif;
    font-size: 7px;
    line-height: 10px;
}
h2, p, ul {
    margin: 0;
    padding: 0;
    font-weight: normal;
}
button, input, select {
    margin: 0;
    padding: 0;
    border: 0;
    border-radius: 0;
    background: none;
    color: inherit;
    font: inherit;
    min-width: 0;
}
.sprite {
    position: absolute;
    width: 0;
    height: 0;
}
.icon {
    display: block;
    width: 13px;
    height: 12px;
    flex: none;
}
.icon.wide {
    width: 18px;
}
.sheet {
    border: 1px solid #777;
    padding: 10px 37px 26px 51px;
}
.sheet-header, .sheet-footer {
    font-family: Lato, "Open Sans", sans-serif;
    font-size: 11px;
    line-height: 16px;
    color: #000;
}
.sheet-header {
    padding-bottom: 14px;
    text-align: center;
}
.sheet-footer {
    display: flex;
    justify-content: space-between;
    margin: 33px 10px 0 -3px;
    padding: 1px 3px 0 1px;
    border-top: 3px solid #622423;
    box-shadow: inset 0 1px #b58a8a;
}

/* window chrome */
.titlebar {
    display: flex;
    align-items: center;
    gap: 1px;
    height: 12px;
    padding: 0 1px;
    border-top: 1px solid #2c3f6b;
    background: #4565a8;
    color: #fff;
}
.win-title {
    flex: 1;
    padding-left: 6px;
    text-align: center;
    font-size: 7px;
    font-weight: bold;
}
.win-btn {
    display: flex;
    align-items: center;
    justify-content: center;
    width: 12px;
    height: 9px;
    background: #e4e8f1;
}
.win-btn svg {
    width: 7px;
    height: 7px;
}
.menubar {
    display: flex;
    align-items: center;
    gap: 8px;
    height: 13px;
    padding: 0 3px;
    background: #ebebeb;
}
.brand {
    margin-left: auto;
    font-family: "Open Sans", sans-serif;
    font-size: 9px;
    font-weight: bold;
    color: #333;
}
.brand b {
    color: #b33;
}
.brand sup {
    font-size: 5px;
    line-height: 1px;
}

/* toolbars */
.toolbar {
    display: flex;
    align-items: center;
    gap: 1px;
    padding: 0 3px;
    border-bottom: 1px solid #bbb;
    background: #e9e9e9;
    white-space: nowrap;
}
.toolbar-main {
    height: 20px;
    border-top: 2px solid #d23a3f;
}
.toolbar-search {
    height: 14px;
}
.toolbar-time {
    height: 17px;
}
.group {
    display: flex;
    align-items: center;
    gap: 3px;
    height: 13px;
    padding: 0 1px 0 5px;
    border-left: 1px solid #999;
}
.group.tight {
    gap: 2px;
    padding-left: 1px;
}
.group.send {
    flex: 1;
    gap: 5px;
    margin-left: 8px;
}
.send-label {
    font-size: 5px;
}
.tool-btn {
    display: flex;
    align-items: center;
}
.tool-btn.pressed {
    background: #d2d2d2;
}
.drop::after, .pick::after, .caret {
    content: "";
    margin-left: 2px;
    border: 2px solid transparent;
    border-top: 3px solid #222;
    border-bottom: 0;
}
.pick {
    display: flex;
    align-items: center;
    height: 11px;
    padding: 0 3px 0 2px;
    border: 1px solid #aaa;
    background: #f0f0f0;
}
.pick select {
    appearance: none;
}
.combo {
    display: flex;
    height: 11px;
    border: 1px solid #999;
    background: #fff;
}
.combo input {
    padding: 0 1px;
}
.w-names {
    width: 44px;
}
.w-times {
    width: 53px;
}
.w-cursor {
    width: 46px;
}
.red-btn {
    display: flex;
    align-items: center;
    justify-content: center;
    width: 10px;
    background: #c9151b;
}
.red-btn::after {
    content: "";
    border: 2px solid transparent;
    border-top: 3px solid #fff;
    border-bottom: 0;
}
.spaced {
    margin-left: 3px;
}
.more {
    margin-left: auto;
}

/* waveform area */
.sim-body {
    display: flex;
    background: #e9e9e9;
}
.side {
    width: 21px;
    padding-left: 4px;
    background: #a2a2a2;
}
.side-head {
    margin: 0 0 3px -4px;
    background: #777;
    color: #ddd;
    text-align: center;
}
.side-tab {
    display: flex;
    align-items: center;
    justify-content: center;
    width: 14px;
    height: 14px;
    margin-bottom: 1px;
    border: 1px solid #888;
    border-left-color: #fff;
    background: #e6e6e6;
}
.side-tab .icon {
    width: 10px;
    height: 9px;
}
.signals {
    display: flex;
    flex-direction: column;
    width: 166px;
    padding: 0 4px 1px 2px;
}
.cursor-info {
    display: flex;
    gap: 2px;
    height: 24px;
    padding-top: 3px;
    font-size: 6px;
    line-height: 8px;
    white-space: nowrap;
}
.cursor-info .base {
    padding-left: 22px;
}
.cursor-icon {
    width: 9px;
    height: 16px;
}
.lists {
    display: flex;
    flex: 1;
    gap: 3px;
}
.list {
    display: flex;
    flex-direction: column;
    background: #000;
    color: #ddd;
}
.names {
    flex: 1;
}
.values {
    width: 47px;
}
.list-head {
    display: flex;
    align-items: center;
    height: 11px;
    padding-left: 3px;
    background: #b0b0b0;
    color: #111;
}
.row {
    display: flex;
    align-items: center;
    gap: 4px;
    height: 10px;
    padding-left: 16px;
    font-size: 6px;
}
.row .icon {
    width: 10px;
    height: 9px;
}
.yellow {
    background: #ffffb4;
    color: #222;
}
.dark {
    background: #333;
}
.parent {
    gap: 3px;
    padding-left: 3px;
}
.minus {
    width: 9px;
}
.child {
    gap: 2px;
    padding-left: 11px;
}
.child::before {
    content: "";
    width: 7px;
    border-top: 1px dotted #888;
}
.last {
    border-bottom: 1px solid #a31515;
}
.values .row {
    padding-left: 2px;
}
.void {
    flex: 1;
}
.hscroll {
    display: flex;
    align-items: center;
    height: 9px;
    background: #ddd;
    color: #666;
    font-size: 8px;
    line-height: 8px;
}
.hscroll i {
    flex: 1;
    height: 7px;
    border: 1px solid #999;
    background: #eee;
}
.waves {
    flex: 1;
    min-width: 0;
    font-family: "DejaVu Sans", Verdana, sans-serif;
}
.vscroll {
    display: flex;
    flex-direction: column;
    align-items: center;
    width: 9px;
    color: #666;
    background: #ddd;
    font-size: 8px;
    line-height: 8px;
}
.vscroll i {
    flex: 1;
    width: 7px;
    border: 1px solid #999;
    background: #e6e6e6;
}
.sim .vscroll {
    width: 12px;
    padding: 35px 2px 10px 0;
    background: #e9e9e9;
}
.statusbar {
    display: flex;
    align-items: center;
    gap: 4px;
    height: 14px;
    padding: 0 2px;
    border-top: 1px solid #aaa;
    background: #e9e9e9;
    white-space: nowrap;
}
.count {
    margin-left: auto;
    padding-left: 2px;
    border-left: 1px solid #999;
}
.taskbar {
    display: flex;
    align-items: center;
    gap: 3px;
    height: 14px;
    padding: 0 2px 0 4px;
    border-top: 1px solid #d4d4d4;
    background: #e8e8e8;
    white-space: nowrap;
}
.taskbar button {
    margin-right: 4px;
}
.tray {
    display: flex;
    align-items: center;
    gap: 3px;
    margin-left: auto;
}
.tray .wide {
    width: 16px;
}
.watermark {
    display: block;
    width: 100%;
    font-family: "Liberation Sans", sans-serif;
}

/* compiler window */
.rtl-frame {
    padding: 0 3px 0 4px;
    border-right: 4px solid #4a67a3;
    border-left: 1px solid #777;
    background: #ededed;
    font-size: 5px;
}
.menubar.small {
    gap: 6px;
    height: 17px;
    border-bottom: 2px solid #b3191e;
}
.panes {
    display: flex;
    height: 279px;
    border-bottom: 1px solid #999;
}
.pane {
    display: flex;
    flex-direction: column;
}
.tree-pane {
    width: 155px;
    padding: 0 2px;
    border-right: 2px solid #666;
}
.schem-pane {
    flex: 1;
    padding-left: 3px;
    border-right: 1px solid #999;
}
.tabs {
    display: flex;
    height: 18px;
    padding: 4px 0;
}
.tabs button {
    padding: 0 4px;
    border-right: 1px solid #555;
}
.tabs .off {
    color: #aaa;
}
.tree {
    flex: 1;
    padding: 1px 0 0 15px;
    border: 1px solid #888;
    background: #fff;
    font-family: "DejaVu Sans Mono", monospace;
    font-size: 5px;
    line-height: 7px;
}
.tree ul {
    margin-left: 5px;
    list-style: none;
}
.tree li {
    position: relative;
    padding-left: 8px;
    border-left: 1px solid #333;
}
.tree li::before {
    content: "";
    position: absolute;
    top: 3px;
    left: 0;
    width: 7px;
    border-top: 1px solid #333;
}
.schem-tools {
    display: flex;
    align-items: center;
    gap: 6px;
    height: 20px;
    padding: 0 2px 0 4px;
}
.pages {
    display: flex;
    gap: 3px;
    margin-left: auto;
}
.pages input {
    width: 22px;
    height: 9px;
    padding: 0 2px;
    border: 1px solid #888;
    background: #fff;
}
.schem-view {
    display: flex;
    padding-right: 3px;
}
.schematic {
    flex: 1;
    min-width: 0;
    background: #000;
}
.schem-view .vscroll {
    margin-left: 1px;
}
.schem-pane .hscroll {
    margin: 1px 13px 0 0;
}
.schem-pane .hscroll i, .schem-pane .vscroll i {
    background: #c4c4c4;
}
.command {
    display: flex;
    align-items: center;
    gap: 2px;
    height: 13px;
}
.command input {
    flex: 1;
    height: 10px;
    padding: 0 2px;
    border: 1px solid #999;
    background: #f4f4f4;
}
.command button {
    width: 12px;
    height: 12px;
    background: #c8141a;
}
.command button svg {
    display: block;
}
.rtl-status {
    display: flex;
    gap: 4px;
    padding: 4px 0 1px;
}
.led {
    width: 15px;
    height: 14px;
    background: #00fb00;
}
.cell {
    flex: 1;
    height: 14px;
    border: 1px solid #fff;
    border-top-color: #888;
    border-left-color: #888;
    text-align: center;
    line-height: 12px;
}
.wide-cell {
    flex: 2;
}
```
